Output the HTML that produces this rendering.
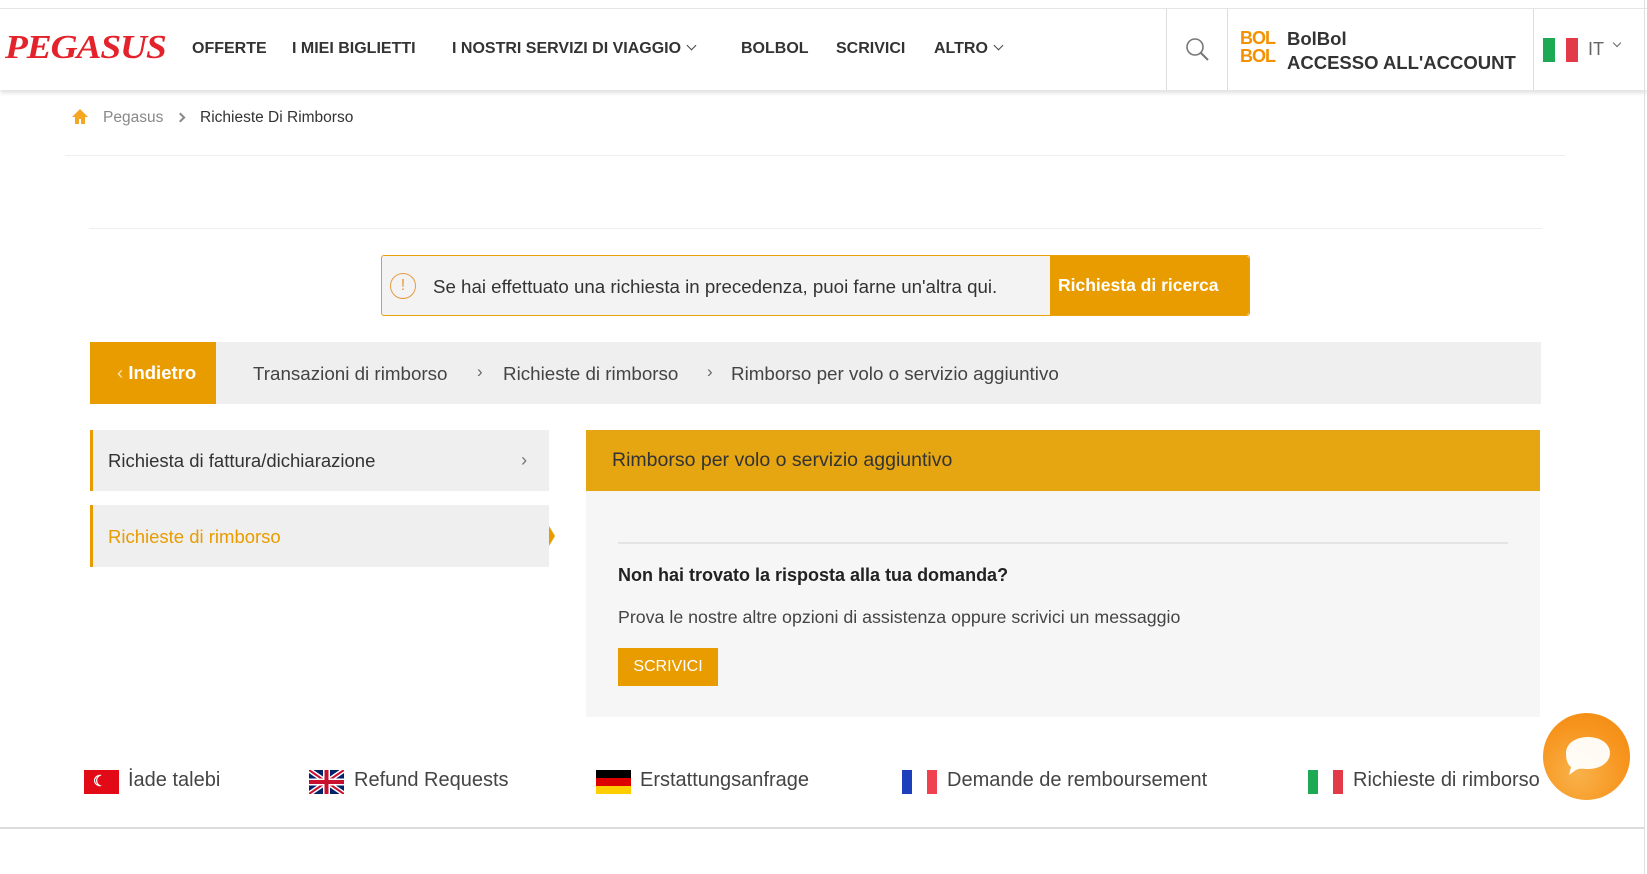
<!DOCTYPE html>
<html><head><meta charset="utf-8"><style>
*{margin:0;padding:0;box-sizing:border-box}
body{width:1647px;height:874px;background:#fff;font-family:"Liberation Sans",sans-serif;color:#333;position:relative;overflow:hidden}
.a{position:absolute;white-space:nowrap}
.nav{font-size:16px;font-weight:bold;color:#333;top:40px}
.line{position:absolute;height:1px;background:#eee}
.chev{display:inline-block;width:7px;height:7px;border-right:1.8px solid #444;border-bottom:1.8px solid #444;transform:rotate(45deg);margin-left:7px;position:relative;top:-4px}
</style></head><body>
<div class="line" style="top:8px;left:0;width:1647px;background:#e6e6e6"></div>
<div class="a" style="top:9px;left:0;width:1647px;height:81px;box-shadow:0 3px 4px rgba(0,0,0,.12);background:#fff"></div>
<div class="a" style="left:5px;top:29px;font-family:'Liberation Serif',serif;font-style:italic;font-weight:bold;font-size:34px;color:#e3222b;letter-spacing:-1px;transform:scaleX(1.1);transform-origin:left">PEGASUS</div>
<div class="a nav" style="left:192px">OFFERTE</div>
<div class="a nav" style="left:292px">I MIEI BIGLIETTI</div>
<div class="a nav" style="left:452px">I NOSTRI SERVIZI DI VIAGGIO<span class="chev"></span></div>
<div class="a nav" style="left:741px">BOLBOL</div>
<div class="a nav" style="left:836px">SCRIVICI</div>
<div class="a nav" style="left:934px">ALTRO<span class="chev"></span></div>
<div class="a" style="left:1166px;top:9px;width:1px;height:81px;background:#ddd"></div>
<div class="a" style="left:1227px;top:9px;width:1px;height:81px;background:#ddd"></div>
<div class="a" style="left:1533px;top:9px;width:1px;height:81px;background:#ddd"></div>
<svg class="a" style="left:1185px;top:37px" width="26" height="26"><circle cx="10" cy="10" r="8" fill="none" stroke="#777" stroke-width="1.6"/><line x1="16" y1="16" x2="23" y2="23" stroke="#777" stroke-width="2"/></svg>
<div class="a" style="left:1240px;top:29px;font-weight:bold;font-size:18px;line-height:18px;color:#f39200;letter-spacing:-1px">BOL<br>BOL</div>
<div class="a" style="left:1287px;top:27px;font-size:18.5px;line-height:24px;color:#333;font-weight:bold">BolBol<br>ACCESSO ALL'ACCOUNT</div>
<div class="a" style="left:1543px;top:38px;width:12px;height:24px;background:#1eaa55"></div>
<div class="a" style="left:1566px;top:38px;width:12px;height:24px;background:#e23a48"></div>
<div class="a" style="left:1588px;top:39px;font-size:18px;color:#666">IT</div>
<div class="a" style="left:1614px;top:40px;width:6px;height:6px;border-right:1.3px solid #666;border-bottom:1.3px solid #666;transform:rotate(45deg)"></div>
<svg class="a" style="left:71px;top:108px" width="18" height="17"><path d="M9 1L1 9h3v7h4v-5h2v5h4V9h3z" fill="#f5a623"/></svg>
<div class="a" style="left:103px;top:109px;font-size:15.5px;color:#888">Pegasus</div>
<div class="a" style="left:177px;top:114px;width:7px;height:7px;border-right:2px solid #888;border-top:2px solid #888;transform:rotate(45deg)"></div>
<div class="a" style="left:200px;top:109px;font-size:15.5px;color:#333">Richieste Di Rimborso</div>
<div class="line" style="top:155px;left:65px;width:1500px"></div>
<div class="line" style="top:228px;left:89px;width:1453px"></div>
<div class="a" style="left:381px;top:255px;width:869px;height:61px;border:1px solid #e8a10a;border-radius:3px;background:#f3f3f4"></div>
<div class="a" style="left:390px;top:273px;width:26px;height:26px;border:1.5px solid #e69b43;border-radius:50%;color:#e69b43;font-size:16px;text-align:center;line-height:23px">!</div>
<div class="a" style="left:433px;top:276px;font-size:18.7px;color:#333">Se hai effettuato una richiesta in precedenza, puoi farne un'altra qui.</div>
<div class="a" style="left:1050px;top:256px;width:199px;height:59px;background:#e89c00;border-radius:0 3px 3px 0;color:#fff;font-weight:bold;font-size:17.5px;padding:19px 0 0 8px">Richiesta di ricerca</div>
<div class="a" style="left:90px;top:342px;width:1451px;height:62px;background:#efefef"></div>
<div class="a" style="left:90px;top:342px;width:126px;height:62px;background:#e89c00;color:#fff;font-weight:bold;font-size:18.5px;padding:20px 0 0 27px"><span style="font-weight:normal;color:#fde2b0">‹ </span>Indietro</div>
<div class="a" style="left:253px;top:363px;font-size:18.8px;color:#444">Transazioni di rimborso</div>
<div class="a" style="left:477px;top:362px;font-size:17px;color:#666">›</div>
<div class="a" style="left:503px;top:363px;font-size:18.8px;color:#444">Richieste di rimborso</div>
<div class="a" style="left:707px;top:362px;font-size:17px;color:#666">›</div>
<div class="a" style="left:731px;top:363px;font-size:18.8px;color:#444">Rimborso per volo o servizio aggiuntivo</div>
<div class="a" style="left:90px;top:430px;width:459px;height:61px;background:#efefef;border-left:3px solid #e89c00;font-size:18.5px;color:#333;padding:20px 0 0 15px">Richiesta di fattura/dichiarazione<span style="position:absolute;left:428px;top:19px;color:#777">›</span></div>
<div class="a" style="left:90px;top:505px;width:459px;height:62px;background:#efefef;border-left:3px solid #e89c00;font-size:18.5px;color:#e89c00;padding:21px 0 0 15px">Richieste di rimborso</div>
<div class="a" style="left:549px;top:526px;width:0;height:0;border-left:6px solid #e89c00;border-top:10px solid transparent;border-bottom:10px solid transparent"></div>
<div class="a" style="left:586px;top:430px;width:954px;height:287px;background:#f6f6f6"></div>
<div class="a" style="left:586px;top:430px;width:954px;height:61px;background:#e5a611;font-size:19.5px;color:#333;padding:19px 0 0 26px">Rimborso per volo o servizio aggiuntivo</div>
<div class="line" style="top:542px;left:618px;width:890px;background:#e4e4e4;height:2px"></div>
<div class="a" style="left:618px;top:565px;font-size:18px;font-weight:bold;color:#222">Non hai trovato la risposta alla tua domanda?</div>
<div class="a" style="left:618px;top:607px;font-size:17.8px;color:#444">Prova le nostre altre opzioni di assistenza oppure scrivici un messaggio</div>
<div class="a" style="left:618px;top:648px;width:100px;height:38px;background:#e89c00;color:#fff;font-size:16px;text-align:center;line-height:38px">SCRIVICI</div>
<div class="a" style="left:84px;top:770px;width:35px;height:24px;background:#e30a17;color:#fff;font-size:15px;font-weight:bold;padding:2px 0 0 9px">☾</div>
<div class="a" style="left:128px;top:769px;font-size:20px;color:#444">İade talebi</div>
<svg class="a" style="left:309px;top:770px" width="35" height="24"><rect width="35" height="24" fill="#012169"/><path d="M0 0L35 24M35 0L0 24" stroke="#fff" stroke-width="5"/><path d="M0 0L35 24M35 0L0 24" stroke="#c8102e" stroke-width="2"/><path d="M17.5 0v24M0 12h35" stroke="#fff" stroke-width="7"/><path d="M17.5 0v24M0 12h35" stroke="#c8102e" stroke-width="4"/></svg>
<div class="a" style="left:354px;top:769px;font-size:20px;color:#444">Refund Requests</div>
<div class="a" style="left:596px;top:770px;width:35px;height:24px;background:linear-gradient(#000 33%,#dd0000 33% 66%,#ffce00 66%)"></div>
<div class="a" style="left:640px;top:769px;font-size:20px;color:#444">Erstattungsanfrage</div>
<div class="a" style="left:902px;top:770px;width:10px;height:24px;background:#1d3fbb"></div>
<div class="a" style="left:927px;top:770px;width:10px;height:24px;background:#ef4150"></div>
<div class="a" style="left:947px;top:769px;font-size:20px;color:#444">Demande de remboursement</div>
<div class="a" style="left:1308px;top:770px;width:10px;height:24px;background:#1eaa55"></div>
<div class="a" style="left:1333px;top:770px;width:10px;height:24px;background:#e23a48"></div>
<div class="a" style="left:1353px;top:769px;font-size:20px;color:#444">Richieste di rimborso</div>
<div class="line" style="top:827px;left:0;width:1644px;background:#ddd;height:2px"></div>
<div class="a" style="left:1644px;top:0;width:1px;height:874px;background:#e0e0e0"></div>
<div class="a" style="left:1543px;top:713px;width:87px;height:87px;border-radius:50%;background:radial-gradient(circle at 40% 70%,#f8b24a,#f7941d 60%,#f08a10)"></div>
<svg class="a" style="left:1561px;top:733px" width="54" height="48"><path d="M27 4C40 4 49 11 49 20S40 36 27 36C22 36 19 35 15 37L8 42L10 34C6 31 5 26 5 20C5 11 14 4 27 4Z" fill="#fff" opacity=".95"/></svg>
</body></html>
